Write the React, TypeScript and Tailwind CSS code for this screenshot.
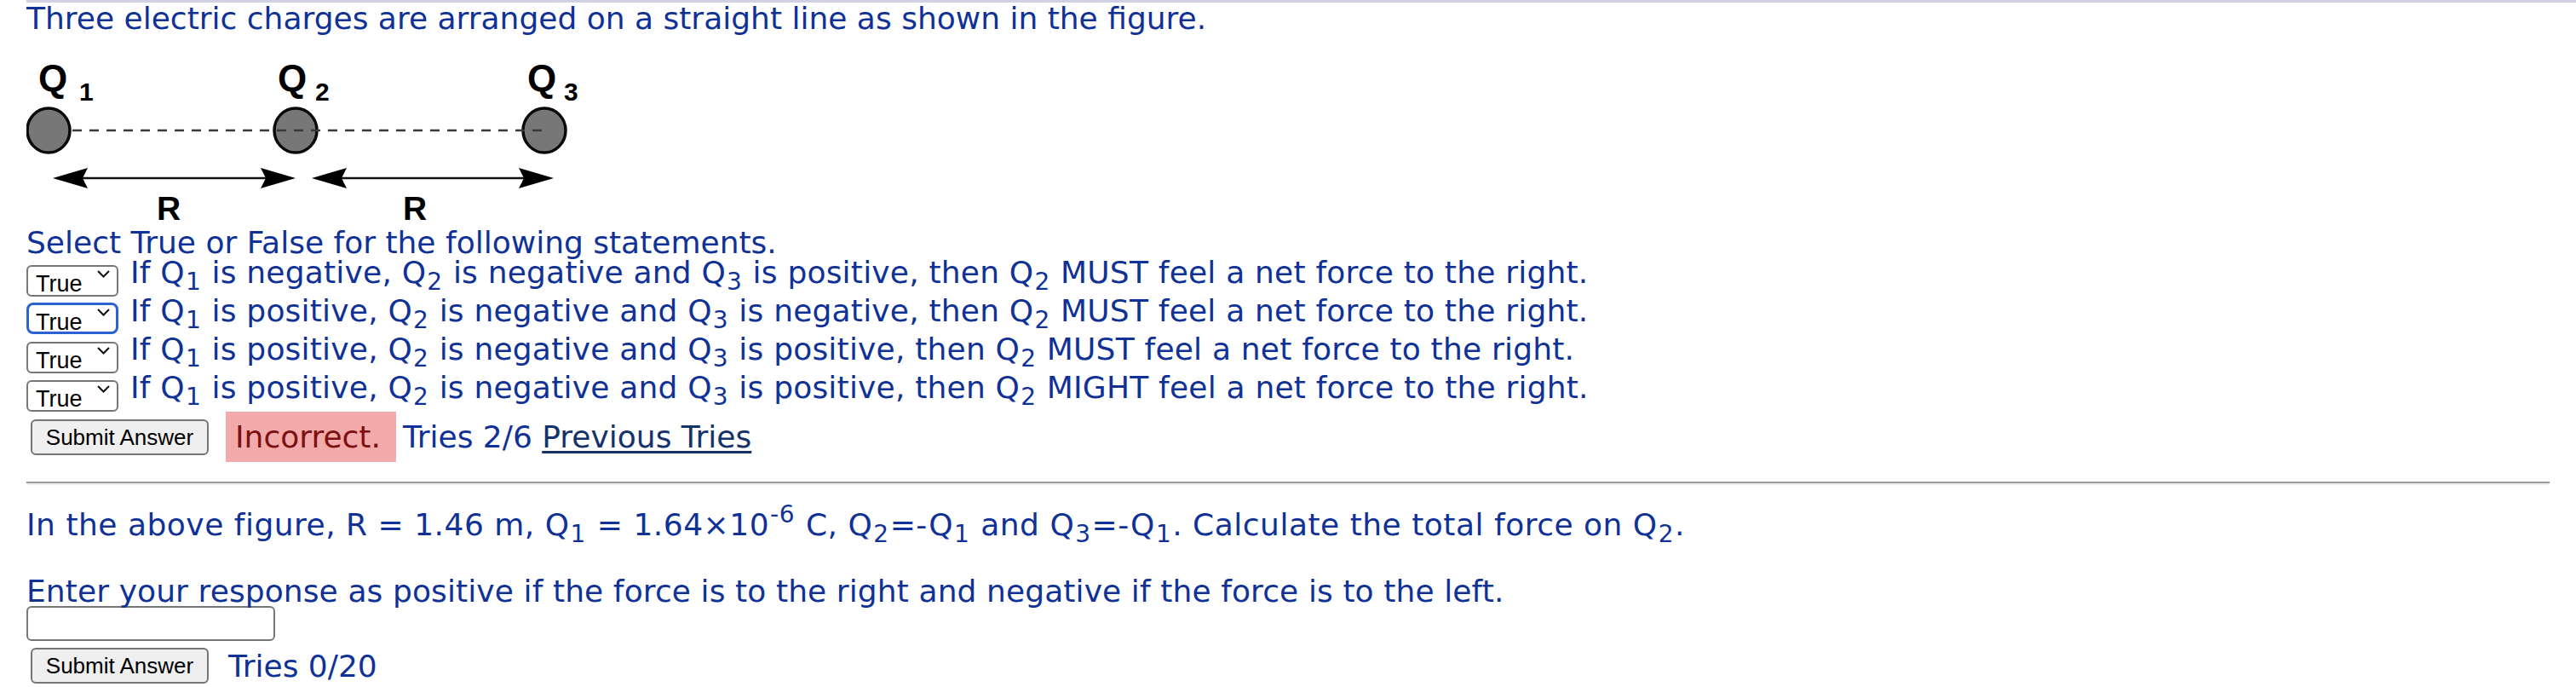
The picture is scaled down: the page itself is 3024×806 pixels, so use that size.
import type { ReactNode } from "react"

const statements = [
  ["negative", "negative", "positive", "MUST"],
  ["positive", "negative", "negative", "MUST"],
  ["positive", "negative", "positive", "MUST"],
  ["positive", "negative", "positive", "MIGHT"],
]

function Sub({ children }: { children: ReactNode }) {
  return <sub className="-bottom-[8px] px-[1px] text-[28px]">{children}</sub>
}

function SubmitButton() {
  return (
    <button
      type="button"
      className="ml-[5px] h-[42px] w-[209px] rounded-[6px] border-2 border-[#767676] bg-[#efefef] font-['Liberation_Sans',Arial,sans-serif] text-[26px] leading-none text-black"
    >
      Submit Answer
    </button>
  )
}

function TrueSelect({ focused }: { focused?: boolean }) {
  return (
    <div className="relative h-[37px] w-[108px] shrink-0">
      <select
        defaultValue="True"
        className={
          focused
            ? "h-full w-full appearance-none rounded-[8px] border-[3px] border-[#2c62d3] bg-white pl-[8px] font-['Liberation_Sans',Arial,sans-serif] text-[27px] text-black outline-none"
            : "h-full w-full appearance-none rounded-[6px] border-2 border-[#767676] bg-white pl-[9px] font-['Liberation_Sans',Arial,sans-serif] text-[27px] text-black outline-none"
        }
      >
        <option>True</option>
        <option>False</option>
      </select>
      <svg
        viewBox="0 0 15 9"
        className="pointer-events-none absolute left-[83px] top-[14px] h-[9px] w-[15px]"
      >
        <path d="M1 1 L7.5 7.5 L14 1" fill="none" stroke="#111" strokeWidth="2" />
      </svg>
    </div>
  )
}

function Figure() {
  const label = "font-['Liberation_Sans',Arial,sans-serif] font-bold"
  return (
    <svg width="680" height="226" viewBox="0 0 680 226" className="block">
      {[26, 316, 608].map((cx) => (
        <ellipse key={cx} cx={cx} cy="113" rx="25" ry="26" fill="#777" stroke="#0a0a0a" strokeWidth="3.5" />
      ))}
      <line x1="54" y1="113" x2="611" y2="113" stroke="#3a3a3a" strokeWidth="2.5" strokeDasharray="11 9" />

      <text x="14" y="67" fontSize="44" className={label} fill="#000">Q</text>
      <text x="62" y="78" fontSize="30" className={label} fill="#000">1</text>
      <text x="295" y="67" fontSize="44" className={label} fill="#000">Q</text>
      <text x="339" y="78" fontSize="30" className={label} fill="#000">2</text>
      <text x="588" y="67" fontSize="44" className={label} fill="#000">Q</text>
      <text x="631" y="78" fontSize="30" className={label} fill="#000">3</text>

      <line x1="60" y1="169" x2="290" y2="169" stroke="#111" strokeWidth="2.5" />
      <polygon points="31,169 72,157 66,169 72,181" fill="#000" />
      <polygon points="316,169 275,157 281,169 275,181" fill="#000" />
      <line x1="364" y1="169" x2="594" y2="169" stroke="#111" strokeWidth="2.5" />
      <polygon points="335,169 376,157 370,169 376,181" fill="#000" />
      <polygon points="619,169 578,157 584,169 578,181" fill="#000" />

      <text x="153" y="218" fontSize="39" className={label} fill="#000">R</text>
      <text x="442" y="218" fontSize="39" className={label} fill="#000">R</text>
    </svg>
  )
}

export default function App() {
  return (
    <div className="min-h-screen bg-white px-[31px] font-['DejaVu_Sans',Verdana,sans-serif] text-[36px] text-[#103296]">
      <div className="-mr-[31px] h-[3px] bg-[#cfd1e2]" />
      <p className="whitespace-nowrap leading-[37px]">
        Three electric charges are arranged on a straight line as shown in the figure.
      </p>
      <Figure />
      <p className="whitespace-nowrap leading-[37px]">Select True or False for the following statements.</p>

      <div className="flex flex-col gap-[8px]">
        {statements.map(([q1, q2, q3, verb], i) => (
          <div key={i} className="flex h-[37px] items-start">
            <TrueSelect focused={i === 1} />
            <span className="ml-[14px] whitespace-nowrap leading-[34px] tracking-[0.2px]">
              If Q<Sub>1</Sub> is {q1}, Q<Sub>2</Sub> is {q2} and Q<Sub>3</Sub> is {q3}, then Q<Sub>2</Sub> {verb} feel a net
              force to the right.
            </span>
          </div>
        ))}
      </div>

      <div className="mt-[8px] flex items-center">
        <SubmitButton />
        <div className="ml-[20px] flex h-[59px] w-[200px] items-center bg-[#f2aaaa] pl-[11px] leading-[37px] text-[#7d1010]">
          Incorrect.
        </div>
        <span className="ml-[8px] whitespace-nowrap leading-[37px]">
          Tries 2/6{" "}
          <a href="#" className="text-[#15336b] underline decoration-[3px] underline-offset-[4px]">
            Previous Tries
          </a>
        </span>
      </div>

      <div className="mt-[23px] h-0 border-t-2 border-b-2 border-t-[#9a9a9a] border-b-[#ececec]" />

      <p className="mt-[28px] whitespace-nowrap leading-[37px] tracking-[0.5px]">
        In the above figure, R = 1.46 m, Q<Sub>1</Sub> = 1.64×10
        <sup className="-top-[15px] px-[1px] text-[28px]">-6</sup> C, Q<Sub>2</Sub>=-Q<Sub>1</Sub> and Q<Sub>3</Sub>=-Q
        <Sub>1</Sub>. Calculate the total force on Q<Sub>2</Sub>.
      </p>
      <p className="mt-[42px] whitespace-nowrap leading-[35px] tracking-[0.1px]">
        Enter your response as positive if the force is to the right and negative if the force is to the left.
      </p>
      <input
        type="text"
        className="block h-[41px] w-[292px] rounded-[6px] border-2 border-[#767676] bg-white px-2 text-[26px] text-black outline-none"
      />
      <div className="mt-[8px] flex items-center">
        <SubmitButton />
        <span className="ml-[23px] whitespace-nowrap leading-[37px]">Tries 0/20</span>
      </div>
    </div>
  )
}
